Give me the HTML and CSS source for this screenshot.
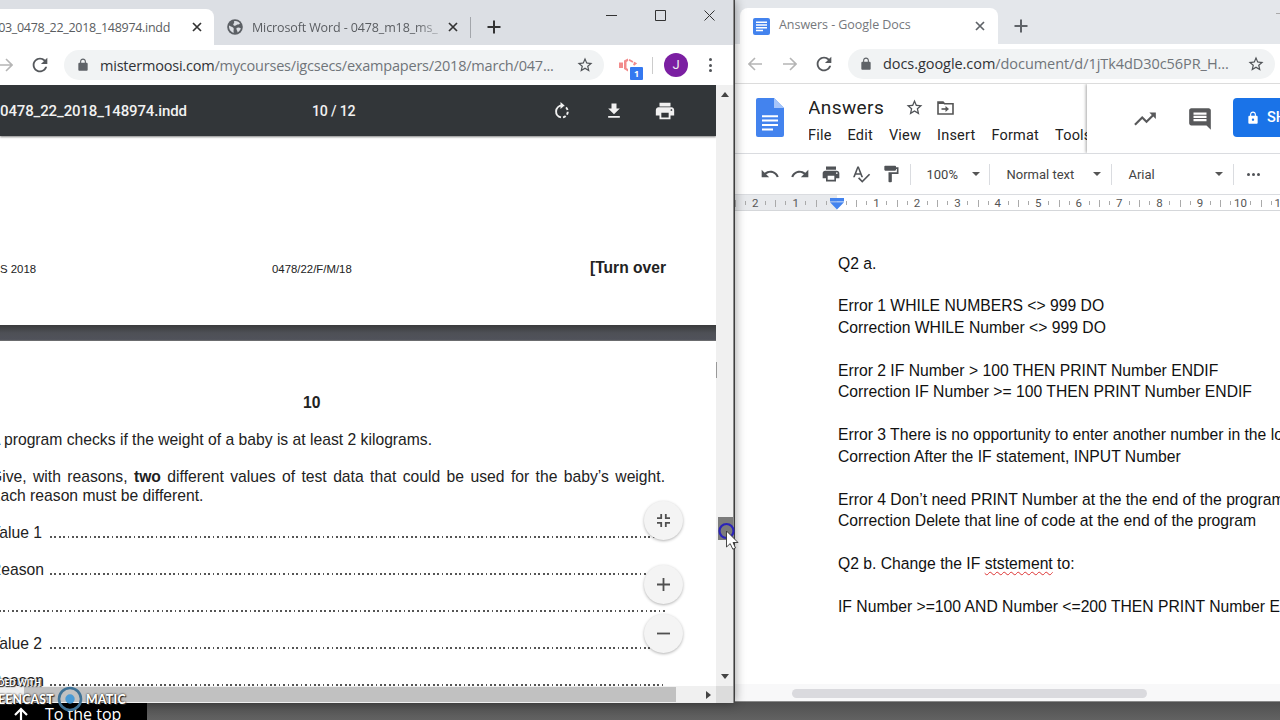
FILE: index.html
```html
<!DOCTYPE html>
<html lang="en">
<head>
  <meta charset="UTF-8" />
  <title>Desktop</title>
  <link rel="stylesheet" href="styles.css">
</head>
<body>
  <div class="desktop">

    <!-- Google Docs window -->
    <div class="window docs">
      <div class="tabs">
        <div class="tab">
          <svg class="tab-icon" width="17" height="17" viewBox="0 0 17 17"><rect width="17" height="17" rx="2" fill="#4383ee"/><path d="M3 4.2h11M3 7h11M3 9.8h11M3 12.6h7" stroke="#fff" stroke-width="1.5"/></svg>
          <span class="tab-title">Answers - Google Docs</span>
          <svg class="close" width="10" height="10" viewBox="0 0 10 10"><path d="M1 1l8 8M9 1l-8 8"/></svg>
        </div>
        <svg class="plus" width="14" height="14" viewBox="0 0 14 14"><path d="M7 .5v13M.5 7h13"/></svg>
        <span class="min"></span>
      </div>
      <div class="address-bar">
        <svg class="nav back" width="14" height="14" viewBox="0 0 14 14"><path d="M14 7H1M7 1L1 7l6 6"/></svg>
        <svg class="nav forward" width="14" height="14" viewBox="0 0 14 14"><path d="M0 7h13M7 1l6 6-6 6"/></svg>
        <svg class="reload" width="22" height="22" viewBox="0 0 24 24"><path d="M17.65 6.35C16.2 4.9 14.21 4 12 4c-4.42 0-7.99 3.58-7.99 8s3.57 8 7.99 8c3.73 0 6.84-2.55 7.73-6h-2.08c-.82 2.33-3.04 4-5.65 4-3.31 0-6-2.69-6-6s2.69-6 6-6c1.66 0 3.14.69 4.22 1.78L13 11h7V4l-2.35 2.35z"/></svg>
        <div class="omnibox">
          <svg class="lock" width="14" height="14" viewBox="0 0 24 24"><path d="M18 8h-1V6c0-2.76-2.24-5-5-5S7 3.24 7 6v2H6c-1.1 0-2 .9-2 2v10c0 1.1.9 2 2 2h12c1.1 0 2-.9 2-2V10c0-1.1-.9-2-2-2zm-2.9 0H8.9V6c0-1.71 1.39-3.1 3.1-3.1s3.1 1.39 3.1 3.1v2z"/></svg>
          <span class="url"><b>docs.google.com</b>/document/d/1jTk4dD30c56PR_H...</span>
          <svg class="star" width="18" height="18" viewBox="0 0 24 24"><path d="M22 9.24l-7.19-.62L12 2 9.19 8.63 2 9.24l5.46 4.73L5.82 21 12 17.27 18.18 21l-1.63-7.03L22 9.24zM12 15.4l-3.76 2.27 1-4.28-3.32-2.88 4.38-.38L12 6.1l1.71 4.04 4.38.38-3.32 2.88 1 4.28L12 15.4z"/></svg>
        </div>
      </div>

      <div class="docs-header">
        <svg class="docs-logo" width="28" height="39" viewBox="0 0 28 39"><path d="M2 0h16l10 10v27a2 2 0 0 1-2 2H2a2 2 0 0 1-2-2V2a2 2 0 0 1 2-2z" fill="#4383ee"/><path d="M18 0l10 10H18z" fill="#a6c5fa"/><path d="M6 18.2h16M6 22.6h16M6 27h16M6 31.4h11" stroke="#fff" stroke-width="2"/></svg>
        <div class="docs-main">
          <div class="docs-name">
            <span>Answers</span>
            <svg class="star" width="19" height="19" viewBox="0 0 24 24"><path d="M22 9.24l-7.19-.62L12 2 9.19 8.63 2 9.24l5.46 4.73L5.82 21 12 17.27 18.18 21l-1.63-7.03L22 9.24zM12 15.4l-3.76 2.27 1-4.28-3.32-2.88 4.38-.38L12 6.1l1.71 4.04 4.38.38-3.32 2.88 1 4.28L12 15.4z"/></svg>
            <svg class="move" width="17" height="14" viewBox="0 0 17 14"><path d="M1 1h5l1.5 1.8H16V13H1z" fill="none" stroke="#555" stroke-width="1.6"/><path d="M1 1h5l1.500 2H1z" fill="#555"/><path d="M4.500 8h4.500" stroke="#555" stroke-width="1.600"/><path d="M8.500 5l3.500 3-3.500 3z" fill="#555"/></svg>
          </div>
          <div class="menu"><span>File</span><span>Edit</span><span>View</span><span>Insert</span><span>Format</span><span>Tools</span></div>
        </div>
        <div class="docs-actions">
          <svg class="trend" width="26" height="26" viewBox="0 0 24 24"><path d="M16 6l2.29 2.29-4.88 4.88-4-4L2 16.59 3.41 18l6-6 4 4 6.3-6.29L22 12V6z"/></svg>
          <svg class="comment" width="26" height="26" viewBox="0 0 24 24"><path d="M21.99 4c0-1.1-.89-2-1.99-2H4c-1.1 0-2 .9-2 2v12c0 1.1.9 2 2 2h14l4 4-.01-18zM18 14H6v-2h12v2zm0-3H6V9h12v2zm0-3H6V6h12v2z"/></svg>
          <div class="share">
            <svg width="14" height="14" viewBox="0 0 24 24"><path d="M18 8h-1V6c0-2.76-2.24-5-5-5S7 3.24 7 6v2H6c-1.1 0-2 .9-2 2v10c0 1.1.9 2 2 2h12c1.1 0 2-.9 2-2V10c0-1.1-.9-2-2-2zm-6 9c-1.1 0-2-.9-2-2s.9-2 2-2 2 .9 2 2-.9 2-2 2zm3.1-9H8.9V6c0-1.71 1.39-3.1 3.1-3.1s3.1 1.39 3.1 3.1v2z"/></svg>
            <span>SHARE</span>
          </div>
        </div>
      </div>

      <div class="format-bar">
        <svg class="tool" viewBox="0 0 24 24"><path d="M12.5 8c-2.65 0-5.05.99-6.9 2.6L2 7v9h9l-3.62-3.62c1.39-1.16 3.16-1.88 5.12-1.88 3.54 0 6.55 2.31 7.6 5.5l2.37-.78C21.08 11.03 17.15 8 12.5 8z"/></svg>
        <svg class="tool" viewBox="0 0 24 24"><path d="M18.4 10.6C16.55 8.99 14.15 8 11.5 8c-4.65 0-8.58 3.03-9.96 7.22L3.9 16c1.05-3.19 4.05-5.5 7.6-5.5 1.95 0 3.73.72 5.12 1.88L13 16h9V7l-3.6 3.6z"/></svg>
        <svg class="tool" viewBox="0 0 24 24"><path d="M19 8H5c-1.66 0-3 1.34-3 3v6h4v4h12v-4h4v-6c0-1.66-1.34-3-3-3zm-3 11H8v-5h8v5zm3-7c-.55 0-1-.45-1-1s.45-1 1-1 1 .45 1 1-.45 1-1 1zm-1-9H6v4h12V3z"/></svg>
        <svg class="tool" viewBox="0 0 24 24"><path d="M12.45 16h2.09L9.43 3H7.57L2.46 16h2.09l1.12-3h5.64l1.14 3zm-6.02-5L8.5 5.48 10.57 11H6.43zm15.16.59l-8.09 8.09L9.83 16l-1.41 1.41 5.09 5.09L23 13l-1.41-1.41z"/></svg>
        <svg class="tool" viewBox="0 0 24 24"><path d="M18 4V3c0-.55-.45-1-1-1H5c-.55 0-1 .45-1 1v4c0 .55.45 1 1 1h12c.55 0 1-.45 1-1V6h1v4H9v11c0 .55.45 1 1 1h2c.55 0 1-.45 1-1v-9h8V4h-3z"/></svg>
        <div class="drop zoom"><span>100%</span><i class="caret"></i></div>
        <div class="drop style"><span>Normal text</span><i class="caret"></i></div>
        <div class="drop font"><span>Arial</span><i class="caret"></i></div>
        <div class="drop more"><i></i><i></i><i></i></div>
      </div>

      <div class="ruler">
        <span class="out">2</span><span class="out">1</span><span class="zero"><svg width="14" height="12" viewBox="0 0 14 12"><path d="M0 0h14v3.5H0zM0 4.2h14L7 11.500z" fill="#4383ee"/></svg></span><span>1</span><span>2</span><span>3</span><span>4</span><span>5</span><span>6</span><span>7</span><span>8</span><span>9</span><span>10</span><span>11</span>
      </div>

      <div class="document">
        <p>Q2 a.</p>
        <p>Error 1 WHILE NUMBERS &lt;&gt; 999 DO<br>Correction WHILE Number &lt;&gt; 999 DO</p>
        <p>Error 2 IF Number &gt; 100 THEN PRINT Number ENDIF<br>Correction IF Number &gt;= 100 THEN PRINT Number ENDIF</p>
        <p>Error 3 There is no opportunity to enter another number in the loop<br>Correction After the IF statement, INPUT Number</p>
        <p>Error 4 Don’t need PRINT Number at the the end of the program<br>Correction Delete that line of code at the end of the program</p>
        <p>Q2 b. Change the IF <span class="misspelt">ststement</span> to:</p>
        <p>IF Number &gt;=100 AND Number &lt;=200 THEN PRINT Number ENDIF</p>
      </div>
      <div class="docs-scroll"><div class="docs-thumb"></div></div>
    </div>

    <!-- PDF window -->
    <div class="window pdf">
      <div class="tabs">
        <div class="tab">
          <span class="tab-title">03_0478_22_2018_148974.indd</span>
          <svg class="close" width="10" height="10" viewBox="0 0 10 10"><path d="M1 1l8 8M9 1l-8 8"/></svg>
        </div>
        <div class="tab-idle">
          <svg class="globe" width="16" height="16" viewBox="0 0 16 16"><circle cx="8" cy="8" r="7.8" fill="#5c6065"/><path d="M2 6.5c2 1.500 3.500 1 4.500 2.500.8 1.200-.5 2.200.3 4.800C3.500 13 1.800 10 2 6.500zM7 2c3-.5 5 .8 6 2.500-1 1.500-2.500.5-3.500 1.500S7.500 7 6.500 6.200 8 4 7 2zM9.500 9c1.500-1 3-.5 4.300.2-.5 2-1.800 3.500-3.300 4.200.3-1.700-1.500-2.700-1-4.400z" fill="#dcdfe4"/></svg>
          <span class="tab-title">Microsoft Word - 0478_m18_ms_</span>
          <svg class="close" width="10" height="10" viewBox="0 0 10 10"><path d="M1 1l8 8M9 1l-8 8"/></svg>
        </div>
        <svg class="plus" width="14" height="14" viewBox="0 0 14 14"><path d="M7 .5v13M.5 7h13"/></svg>
        <svg class="controls" width="109" height="12" viewBox="0 0 109 12"><path d="M0 5.500h11M49.500 .5h10v10h-10zM98.500 .5l10 10M108.500 .5l-10 10"/></svg>
      </div>
      <div class="address-bar">
        <svg class="nav forward" width="14" height="14" viewBox="0 0 14 14"><path d="M0 7h13M7 1l6 6-6 6"/></svg>
        <svg class="reload" width="22" height="22" viewBox="0 0 24 24"><path d="M17.65 6.35C16.2 4.9 14.21 4 12 4c-4.42 0-7.99 3.58-7.99 8s3.57 8 7.99 8c3.73 0 6.84-2.55 7.73-6h-2.08c-.82 2.33-3.04 4-5.65 4-3.31 0-6-2.69-6-6s2.69-6 6-6c1.66 0 3.14.69 4.22 1.78L13 11h7V4l-2.35 2.35z"/></svg>
        <div class="omnibox">
          <svg class="lock" width="14" height="14" viewBox="0 0 24 24"><path d="M18 8h-1V6c0-2.76-2.24-5-5-5S7 3.24 7 6v2H6c-1.1 0-2 .9-2 2v10c0 1.1.9 2 2 2h12c1.1 0 2-.9 2-2V10c0-1.1-.9-2-2-2zm-2.9 0H8.9V6c0-1.71 1.39-3.1 3.1-3.1s3.1 1.39 3.1 3.1v2z"/></svg>
          <span class="url"><b>mistermoosi.com</b>/mycourses/igcsecs/exampapers/2018/march/047...</span>
          <svg class="star" width="18" height="18" viewBox="0 0 24 24"><path d="M22 9.24l-7.19-.62L12 2 9.19 8.63 2 9.24l5.46 4.73L5.82 21 12 17.27 18.18 21l-1.63-7.03L22 9.24zM12 15.4l-3.76 2.27 1-4.28-3.32-2.88 4.38-.38L12 6.1l1.71 4.04 4.38.38-3.32 2.88 1 4.28L12 15.4z"/></svg>
        </div>
        <div class="extension">
          <svg width="18" height="14" viewBox="0 0 18 14"><path d="M0 4.500h4V10H0zM5 2.500l4-2v2.500L7.500 4v6l1.500 1v2.500L5 11z" fill="#f28b8b"/><path d="M10 1.800l6.500 3.700-2.500 2" fill="none" stroke="#f28b8b" stroke-width="1.800" stroke-dasharray="4.500 1"/></svg>
          <span class="count">1</span>
        </div>
        <div class="avatar">J</div>
        <div class="kebab"><i></i><i></i><i></i></div>
      </div>

      <div class="viewer">
        <div class="viewer-main">
          <div class="viewer-bar">
            <span class="file-name">0478_22_2018_148974.indd</span>
            <span class="page-no">10 / 12</span>
            <svg class="rotate" width="18" height="18" viewBox="0 0 18 18"><path d="M9 3.5A6 6 0 0 0 8 15.4" fill="none" stroke="#f1f1f1" stroke-width="1.9"/><path d="M10 15.4A6 6 0 0 0 11.5 4.2" fill="none" stroke="#f1f1f1" stroke-width="1.9" stroke-dasharray="3 1.8"/><path d="M7.5 0v7L11.5 3.5z" fill="#f1f1f1"/></svg>
            <svg class="download" width="20" height="20" viewBox="0 0 24 24"><path d="M19 9h-4V3H9v6H5l7 7 7-7zM5 18v2h14v-2H5z"/></svg>
            <svg class="print" width="22" height="22" viewBox="0 0 24 24"><path d="M19 8H5c-1.66 0-3 1.34-3 3v6h4v4h12v-4h4v-6c0-1.66-1.34-3-3-3zm-3 11H8v-5h8v5zm3-7c-.55 0-1-.45-1-1s.45-1 1-1 1 .45 1 1-.45 1-1 1zm-1-9H6v4h12V3z"/></svg>
          </div>
          <div class="page page-footer">
            <span>S 2018</span>
            <span class="code">0478/22/F/M/18</span>
            <b>[Turn over</b>
          </div>
          <div class="page-gap"></div>
          <div class="page question">
            <p class="number">10</p>
            <p class="intro">A program checks if the weight of a baby is at least 2 kilograms.</p>
            <p class="task"><span class="full">Give, with reasons, <b>two</b> different values of test data that could be used for the baby’s weight.</span>Each reason must be different.</p>
            <div class="answer"><span>Value 1</span><i class="dots"></i></div>
            <div class="answer"><span>Reason</span><i class="dots"></i></div>
            <div class="answer"><i class="dots"></i></div>
            <div class="answer"><span>Value 2</span><i class="dots"></i></div>
            <div class="answer"><span>Reason</span><i class="dots"></i></div>
          </div>
          <div class="zoom-buttons">
            <div class="round fit"><svg width="13" height="13" viewBox="0 0 13 13"><path d="M0 4.200h4.200V0M8.800 0v4.200H13M0 8.800h4.200V13M8.800 13V8.800H13"/></svg></div>
            <div class="round"><svg width="13" height="13" viewBox="0 0 13 13"><path d="M6.500 0v13M0 6.500h13"/></svg></div>
            <div class="round"><svg width="13" height="13" viewBox="0 0 13 13"><path d="M0 6.500h13"/></svg></div>
          </div>
        </div>
        <div class="vscroll">
          <i class="up"></i>
          <i class="tick"></i>
          <div class="vthumb"></div>
          <i class="down"></i>
        </div>
      </div>
      <div class="hscroll">
        <div class="hthumb"></div>
        <i class="right"></i>
        <div class="corner"></div>
      </div>
    </div>

    <div class="top-link">
      <svg width="14" height="15" viewBox="0 0 14 15"><path d="M7 15V2M1 8l6-6 6 6" fill="none" stroke="#fff" stroke-width="2.2"/></svg>
      <span>To the top</span>
    </div>

    <div class="watermark">
      <div class="recorded">DED WITH</div>
      <div class="brand">
        <span>EENCAST</span>
        <svg width="26" height="26" viewBox="0 0 26 26"><circle cx="13" cy="13" r="11" fill="none" stroke="#3f7296" stroke-width="2.6"/><circle cx="13" cy="13" r="4.7" fill="#4a9bd6"/></svg>
        <span>MATIC</span>
      </div>
    </div>

    <svg class="cursor" width="24" height="30" viewBox="0 0 24 30"><circle cx="8.5" cy="9" r="7" fill="none" stroke="#2b24b8" stroke-width="2.2"/><path d="M8.500 9v16l3.700-3.400 2.600 5.600 2.700-1.200-2.500-5.500h5z" fill="#fff" stroke="#333" stroke-width=".9"/></svg>
  </div>
</body>
</html>
```
FILE: styles.css
```css
* {
  box-sizing: border-box;
}

body {
  margin: 0;
  font-family: "Liberation Sans", Arial, sans-serif;
}

p {
  margin: 0;
}

svg {
  display: block;
  flex: none;
}

i {
  display: block;
}

.desktop {
  position: relative;
  width: 1280px;
  height: 720px;
  overflow: hidden;
  background: linear-gradient(#505050 702px, #626262 720px);
}

.window {
  position: absolute;
  top: 0;
  overflow: hidden;
  background: #fff;
  white-space: nowrap;
}

.docs {
  left: 735px;
  width: 545px;
  height: 702px;
  border-bottom: 1px solid #8a8a8a;
}

.pdf {
  left: 0;
  width: 734px;
  height: 703px;
  border-right: 1px solid #8c8c8c;
  box-shadow: 1px 0 10px rgba(0, 0, 0, 0.4);
}

/* browser tabs and address bar */

.tabs {
  display: flex;
  align-items: flex-end;
  font-family: "Open Sans", "Noto Sans", sans-serif;
  font-size: 12.5px;
  color: #5a5d61;
}

.pdf .tabs {
  height: 45px;
  background: #dcdfe4;
}

.docs .tabs {
  height: 44px;
  background: #e4e7eb;
  color: #75787c;
}

.tab,
.tab-idle {
  display: flex;
  align-items: center;
  height: 36px;
}

.tab {
  background: #fff;
  border-radius: 0 8px 0 0;
}

.pdf .tab {
  width: 214px;
  justify-content: flex-end;
  padding-right: 12px;
}

.pdf .tab .tab-title {
  letter-spacing: -0.3px;
}

.docs .tab {
  width: 258px;
  margin-left: 5px;
  padding: 0 13px;
  border-radius: 8px 8px 0 0;
}

.pdf .tab .close {
  margin-left: 22px;
}

.docs .tab-title {
  margin-left: 9px;
  line-height: 34px;
  height: 36px;
  letter-spacing: -0.05px;
}

.docs .close {
  margin-left: auto;
}

.tab-idle {
  width: 257px;
  padding-left: 13px;
}

.tab-idle::after {
  content: "";
  width: 1px;
  height: 21px;
  margin-left: 12px;
  background: #a3a6ab;
}

.tab-idle .tab-title {
  width: 186px;
  margin-left: 9px;
  letter-spacing: -0.12px;
  -webkit-mask-image: linear-gradient(to right, #000 88%, rgba(0, 0, 0, 0.35));
  mask-image: linear-gradient(to right, #000 88%, rgba(0, 0, 0, 0.35));
}

.tab-idle .close {
  margin-left: 10px;
}

.close,
.plus {
  fill: none;
  stroke: #333;
  stroke-width: 1.7;
}

.docs .close,
.docs .plus {
  stroke: #5f6368;
}

.plus {
  stroke-width: 2;
  margin: 0 0 11px 16px;
}

.controls {
  margin: 0 0 23px 105px;
  fill: none;
  stroke: #333;
  stroke-width: 1;
}

.min {
  width: 4px;
  height: 1px;
  margin: 0 0 30px auto;
  background: #aaa;
}

.address-bar {
  display: flex;
  align-items: center;
  height: 40px;
  background: #fff;
}

.docs .address-bar {
  padding-left: 13px;
  border-bottom: 1px solid #dcdcdc;
}

.nav {
  fill: none;
  stroke: #b5b5b5;
  stroke-width: 1.6;
}

.docs .forward {
  margin-left: 21px;
}

.pdf .forward {
  margin-left: -1px;
}

.reload {
  margin-left: 16px;
  fill: #55585c;
}

.omnibox {
  display: flex;
  align-items: center;
  height: 30px;
  margin-left: 13px;
  border-radius: 15px;
  background: #f1f3f4;
  font-family: "Open Sans", "Noto Sans", sans-serif;
  font-size: 14.5px;
  color: #70757a;
}

.pdf .omnibox {
  width: 540px;
  padding: 0 10px 0 12px;
  letter-spacing: -0.21px;
}

.docs .omnibox {
  width: 427px;
  flex: none;
  padding: 0 10px 0 11px;
  letter-spacing: -0.06px;
}

.omnibox b {
  font-weight: 400;
  color: #303236;
}

.lock {
  fill: #5f6368;
}

.url {
  margin-left: 10px;
}

.star {
  margin-left: auto;
  fill: #505357;
}

.extension {
  position: relative;
  margin-left: 15px;
}

.count {
  position: absolute;
  left: 11px;
  top: 9px;
  width: 13px;
  height: 13px;
  border-radius: 1px;
  background: #3478f0;
  color: #fff;
  font: 700 9px/13px "Open Sans", sans-serif;
  text-align: center;
}

.avatar {
  flex: none;
  width: 24px;
  height: 24px;
  margin-left: 27px;
  border-radius: 50%;
  background: #7b1fa2;
  color: #eee;
  font: 13px/24px Roboto, sans-serif;
  text-align: center;
}

.extension::after {
  content: "";
  position: absolute;
  left: 33px;
  top: -1px;
  width: 1px;
  height: 17px;
  background: #ccc;
}

.kebab {
  display: grid;
  gap: 2.5px;
  margin-left: 21px;
}

.kebab i,
.more i {
  width: 3px;
  height: 3px;
  border-radius: 50%;
  background: #505357;
}

/* pdf viewer */

.viewer {
  display: flex;
  height: 601px;
}

.viewer-main {
  position: relative;
  width: 716px;
  overflow: hidden;
}

.viewer-bar {
  position: relative;
  display: flex;
  align-items: center;
  height: 51px;
  background: #323639;
  box-shadow: 0 1px 2px rgba(0, 0, 0, 0.5);
  color: #f1f1f1;
  fill: #f1f1f1;
  font-family: Roboto, sans-serif;
  font-size: 15px;
}

.file-name {
  width: 312px;
  font-weight: 500;
  letter-spacing: -0.12px;
}

.page-no {
  width: 241px;
  font-size: 14.2px;
  letter-spacing: -0.2px;
  font-weight: 500;
}

.download {
  margin-left: 33px;
}

.print {
  margin-left: 30px;
}

.page {
  color: #222;
}

.page-footer {
  display: flex;
  height: 189px;
  padding-top: 123px;
  font-size: 11.4px;
  line-height: 20px;
}

.page-footer span {
  width: 272px;
}

.page-footer .code {
  width: 318px;
}

.page-footer b {
  font-size: 15.6px;
  line-height: 18px;
}

.page-gap {
  height: 16px;
  background: linear-gradient(#3a3b3c, #4e5056 50%, #50525a 90%, #777);
}

.question {
  width: 675px;
  margin-left: -10px;
  padding-top: 53px;
  font-size: 15.7px;
  line-height: 18.5px;
}

.question p,
.answer {
  margin-bottom: 18.5px;
}

.number {
  padding-left: 313px;
  font-weight: 700;
}

.full {
  display: block;
  text-align-last: justify;
  white-space: normal;
}

.answer {
  display: flex;
  height: 18.5px;
}

.answer span {
  width: 60px;
}

.dots {
  flex: 1;
  height: 2px;
  margin-top: 12px;
  background: repeating-linear-gradient(to right, #555 0 1.7px, transparent 1.7px 4.4px);
}

.zoom-buttons {
  position: absolute;
  left: 644px;
  top: 416px;
  display: grid;
  gap: 10px;
}

.round {
  display: grid;
  place-items: center;
  width: 39px;
  height: 39px;
  border-radius: 50%;
  background: #f4f4f4;
  box-shadow: 0 1px 3px rgba(0, 0, 0, 0.3);
  fill: none;
  stroke: #505050;
  stroke-width: 1.8;
}

.fit {
  margin-bottom: 15px;
}

.vscroll {
  display: flex;
  flex-direction: column;
  align-items: center;
  width: 17px;
  background: #f0f0f0;
}

.up,
.down,
.right {
  border: 4px solid transparent;
}

.up {
  margin-top: 3px;
  border-bottom: 5px solid #444;
}

.tick {
  align-self: flex-start;
  width: 1px;
  height: 16px;
  margin-top: 265px;
  background: #999;
}

.vthumb {
  width: 15px;
  height: 23px;
  margin: 139px -1px 0 0;
  background: #7b7b7b;
}

.down {
  margin-top: 134px;
  border-top: 5px solid #444;
}

.hscroll {
  display: flex;
  align-items: center;
  height: 17px;
  background: #f0f0f0;
}

.hthumb {
  width: 652px;
  height: 15px;
  margin-left: 24px;
  background: #c1c1c1;
}

.right {
  margin-left: 30px;
  border-left: 5px solid #444;
}

.corner {
  width: 17px;
  height: 17px;
  margin-left: auto;
  background: #dcdcdc;
}

/* docs */

.docs-header {
  display: flex;
  height: 70px;
  border-bottom: 1px solid #dadce0;
}

.docs-logo {
  margin: 14px 0 0 21px;
}

.docs-main {
  width: 278px;
  margin-left: 25px;
  padding-top: 10px;
  overflow: hidden;
  font-family: Roboto, sans-serif;
  color: #222;
}

.docs-name {
  display: flex;
  align-items: center;
  height: 27px;
  margin-left: -1px;
  font-size: 19px;
  letter-spacing: 0.4px;
}

.docs-name .star {
  margin-left: 21px;
}

.move {
  margin-left: 13px;
}

.menu {
  display: flex;
  gap: 16px;
  height: 30px;
  margin-left: -1px;
  font-size: 14.5px;
  line-height: 30px;
  letter-spacing: 0.2px;
}

.docs-actions {
  display: flex;
  align-items: center;
  width: 193px;
  flex: none;
  padding-left: 45px;
  box-shadow: -1px 0 3px rgba(0, 0, 0, 0.35);
  clip-path: inset(0 0 0 -8px);
  fill: #58595b;
}

.comment {
  margin-left: 29px;
}

.share {
  display: flex;
  align-items: center;
  width: 110px;
  height: 39px;
  margin: -2px 0 0 20px;
  padding-left: 13px;
  flex: none;
  border-radius: 4px;
  background: #1a73e8;
  color: #fff;
  fill: #fff;
  font: 500 14.5px Roboto, sans-serif;
}

.share span {
  margin-left: 7px;
}

.format-bar {
  display: flex;
  align-items: center;
  height: 41px;
  padding-left: 25px;
  border-bottom: 1px solid #dadce0;
  font-family: Roboto, sans-serif;
  font-size: 13px;
  color: #444;
}

.tool {
  width: 20px;
  height: 20px;
  margin-right: 10.3px;
  fill: #505357;
}

.drop {
  display: flex;
  align-items: center;
  justify-content: space-between;
  height: 21px;
  padding: 0 10px 0 16px;
  border-left: 1px solid #dadce0;
}

.zoom {
  width: 79px;
  margin-left: -1px;
  padding: 0 9px 0 15px;
}

.style,
.font {
  width: 122px;
}

.more {
  width: 46px;
  padding: 0 0 0 13px;
  justify-content: flex-start;
  gap: 2px;
}

.caret {
  border: 4.5px solid transparent;
  border-top-color: #555;
  border-bottom: 0;
}

.ruler {
  display: flex;
  height: 16px;
  border-bottom: 1px solid #d5d7da;
  font: 11.5px/16px Roboto, sans-serif;
  color: #555;
}

.ruler span {
  display: flex;
  justify-content: center;
  flex: none;
  width: 40.45px;
  background:
    linear-gradient(#aaa, #aaa) 0 5px / 1px 7px no-repeat,
    linear-gradient(#aaa, #aaa) 10px 6px / 1px 4px no-repeat,
    linear-gradient(#aaa, #aaa) 30px 6px / 1px 4px no-repeat;
}

.ruler .out {
  background-color: #e8eaed;
}

.ruler .zero {
  padding: 3px 0 0 2px;
  background-image:
    linear-gradient(#aaa, #aaa),
    linear-gradient(#aaa, #aaa),
    linear-gradient(#aaa, #aaa),
    linear-gradient(to right, #e8eaed 21px, #fff 21px);
  background-position: 0 5px, 10px 6px, 30px 6px, 0 0;
  background-size: 1px 7px, 1px 4px, 1px 4px, 100% 100%;
}

.document {
  height: 473px;
  padding: 41.6px 0 0 103px;
  font-size: 15.71px;
  line-height: 21.45px;
  color: #111;
}

.document p {
  margin-bottom: 21.45px;
}

.misspelt {
  text-decoration: underline wavy #d33 1.2px;
  text-underline-offset: 1.5px;
}

.docs-scroll {
  height: 17px;
  padding: 5px 0 0 57px;
  background: #f8f8f9;
}

.docs-thumb {
  width: 355px;
  height: 9px;
  border-radius: 5px;
  background: #dadade;
}

/* things lying over the windows */

.top-link {
  position: absolute;
  left: 0;
  top: 703px;
  width: 147px;
  height: 17px;
  display: flex;
  padding: 4px 0 0 14px;
  background: #000;
  color: #fff;
  font: 16px/15px "Open Sans", sans-serif;
  overflow: hidden;
}

.top-link span {
  margin-left: 17px;
}

.watermark {
  position: absolute;
  left: -2px;
  top: 677px;
  color: #fff;
  font-family: Lato, sans-serif;
  font-weight: 900;
  text-shadow: 0 0 2px #000, 1px 1px 1px #333;
}

.recorded {
  font-size: 8.5px;
  line-height: 12px;
}

.brand {
  display: flex;
  align-items: center;
  gap: 3px;
  margin-top: -3px;
  font-size: 12.3px;
  letter-spacing: 0.2px;
}

.cursor {
  position: absolute;
  left: 718px;
  top: 522px;
}
```
